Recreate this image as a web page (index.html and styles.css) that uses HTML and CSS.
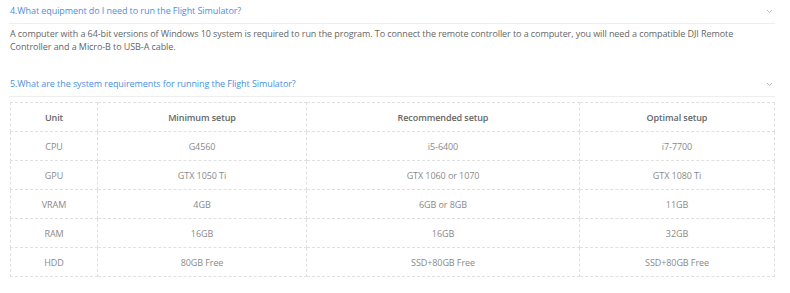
FILE: index.html
```html
<!DOCTYPE html>
<html lang="en">
<head>
  <meta charset="UTF-8">
  <title>Flight Simulator FAQ</title>
  <link rel="stylesheet" href="styles.css">
</head>
<body>
  <div class="faq">
    <div class="pergunta">
      <div class="titulo">
        <span>4.What equipment do I need to run the Flight Simulator?</span>
        <svg class="seta" width="7" height="5" viewBox="0 0 7 5"><polyline points="1,1 3.5,3.5 6,1" fill="none" stroke="#b8b8b8" stroke-width="1"/></svg>
      </div>
      <div class="resposta">
        <p>A computer with a 64-bit versions of Windows 10 system is required to run the program. To connect the remote controller to a computer, you will need a compatible DJI Remote Controller and a Micro-B to USB-A cable.</p>
      </div>
    </div>

    <div class="pergunta">
      <div class="titulo">
        <span>5.What are the system requirements for running the Flight Simulator?</span>
        <svg class="seta" width="7" height="5" viewBox="0 0 7 5"><polyline points="1,1 3.5,3.5 6,1" fill="none" stroke="#b8b8b8" stroke-width="1"/></svg>
      </div>
      <table class="requisitos">
        <colgroup>
          <col style="width: 87px">
          <col style="width: 209px">
          <col style="width: 273px">
          <col style="width: 195px">
        </colgroup>
        <tr>
          <th>Unit</th>
          <th>Minimum setup</th>
          <th>Recommended setup</th>
          <th>Optimal setup</th>
        </tr>
        <tr><td>CPU</td><td>G4560</td><td>i5-6400</td><td>i7-7700</td></tr>
        <tr><td>GPU</td><td>GTX 1050 Ti</td><td>GTX 1060 or 1070</td><td>GTX 1080 Ti</td></tr>
        <tr><td>VRAM</td><td>4GB</td><td>6GB or 8GB</td><td>11GB</td></tr>
        <tr><td>RAM</td><td>16GB</td><td>16GB</td><td>32GB</td></tr>
        <tr><td>HDD</td><td>80GB Free</td><td>SSD+80GB Free</td><td>SSD+80GB Free</td></tr>
      </table>
    </div>
  </div>
</body>
</html>
```

FILE: styles.css
```css
body {
  font-family: "Open Sans", "Liberation Sans", sans-serif;
  font-size: 9px;
  letter-spacing: -0.08px;
  background: #fff;
  margin: 0;
}

.faq {
  width: 766px;
  margin-left: 9px;
}

.titulo {
  display: flex;
  justify-content: space-between;
  align-items: center;
  padding: 5px 2px 6px 1px;
  line-height: 12px;
  color: #4a90e2;
  border-bottom: 1px solid #eeeeee;
}

.seta {
  display: block;
}

.resposta {
  padding: 3px 0 20px 1px;
}

.resposta p {
  margin: 0;
  max-width: 755px;
  line-height: 13px;
  color: #666;
}

.requisitos {
  table-layout: fixed;
  width: 764px;
  margin: 5px 0 0 1px;
  border-collapse: collapse;
}

.requisitos th,
.requisitos td {
  border: 1px dashed #e0e0e0;
  height: 28px;
  padding: 0;
  text-align: center;
  vertical-align: middle;
}

.requisitos th {
  color: #666;
  font-weight: 600;
}

.requisitos td {
  color: #8a8a8a;
}
```
